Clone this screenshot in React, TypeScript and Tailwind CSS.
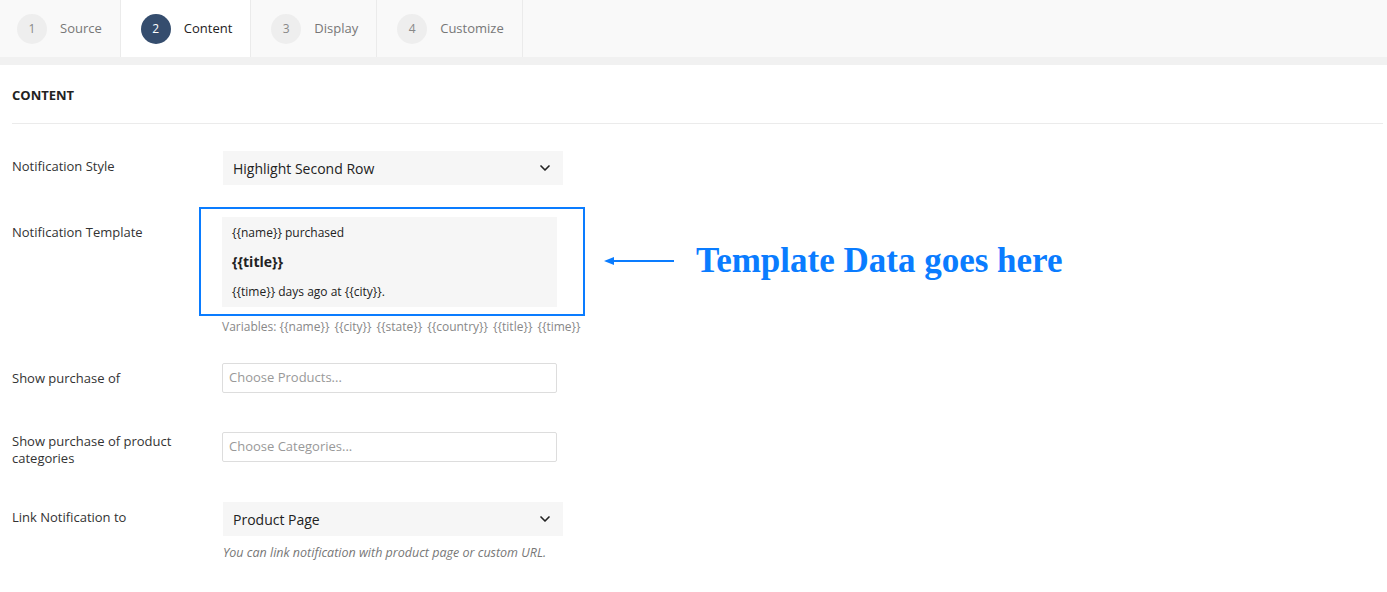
import { ChevronDown } from 'lucide-react';

const steps = [
  { n: 1, label: 'Source' },
  { n: 2, label: 'Content', active: true },
  { n: 3, label: 'Display' },
  { n: 4, label: 'Customize' },
];

function Select({ value }: { value: string }) {
  return (
    <div className="w-[340px] h-[34px] bg-[#f6f6f6] flex items-center justify-between pl-[10px] pr-[10px] text-[14px] text-[#222]">
      <span>{value}</span>
      <ChevronDown className="w-[16px] h-[16px] text-[#222]" strokeWidth={2.5} />
    </div>
  );
}

function Input({ placeholder }: { placeholder: string }) {
  return (
    <div className="w-[335px] h-[30px] border border-[#dddddd] rounded-[2px] bg-white flex items-center px-[6px] text-[13px] text-[#999]">
      {placeholder}
    </div>
  );
}

export default function App() {
  return (
    <div className="w-[1387px] h-[592px] bg-white overflow-hidden font-['Open_Sans',sans-serif] text-[13px] text-[#333]">
      {/* Steps */}
      <div className="h-[57px] bg-[#f9f9f9] flex">
        {steps.map((s, i) => (
          <div
            key={s.n}
            className={`flex items-center gap-[13px] border-r border-[#ebebeb] ${i === 0 ? 'pl-[17px] pr-[18px]' : 'pl-[20px] pr-[18px]'} ${s.active ? 'bg-white' : ''}`}
          >
            <div
              className={`w-[30px] h-[30px] rounded-full flex items-center justify-center text-[12px] ${s.active ? 'bg-[#354d6e] text-white' : 'bg-[#eeeeee] text-[#888]'}`}
            >
              {s.n}
            </div>
            <span className={s.active ? 'text-[#222]' : 'text-[#777]'}>{s.label}</span>
          </div>
        ))}
      </div>
      <div className="h-[8px] bg-[#f1f1f1]" />

      <div className="pl-[12px] pr-[4px]">
        <div className="h-[59px] flex items-center border-b border-[#ebebeb] pt-[3px]">
          <h2 className="font-bold text-[13px] text-[#222]">CONTENT</h2>
        </div>

        {/* Notification Style */}
        <div className="flex mt-[27px]">
          <div className="w-[211px] pt-[6px] text-[#333]">Notification Style</div>
          <Select value="Highlight Second Row" />
        </div>

        {/* Notification Template */}
        <div className="flex mt-[32px] relative">
          <div className="w-[210px] pt-[6px] text-[#333]">Notification Template</div>
          <div>
            <div className="w-[335px] h-[90px] bg-[#f6f6f6] pl-[10px] pt-[8px] text-[#222]">
              <div className="text-[12px] leading-[16px]">{'{{name}} purchased'}</div>
              <div className="text-[14px] font-bold leading-[18px] mt-[12px]">{'{{title}}'}</div>
              <div className="text-[12px] leading-[16px] mt-[13px]">{'{{time}} days ago at {{city}}.'}</div>
            </div>
            <div className="mt-[11px] text-[12px] text-[#888] flex gap-[5px]">
              <span>{'Variables: {{name}}'}</span>
              <span>{'{{city}}'}</span>
              <span>{'{{state}}'}</span>
              <span>{'{{country}}'}</span>
              <span>{'{{title}}'}</span>
              <span>{'{{time}}'}</span>
            </div>
          </div>

          {/* annotation */}
          <div className="absolute left-[187px] top-[-10px] w-[386px] h-[109px] border-2 border-[#0a7cff]" />
          <div className="absolute left-[592px] top-[26px] flex items-center">
            <svg width="70" height="10" viewBox="0 0 70 10">
              <line x1="6" y1="5" x2="70" y2="5" stroke="#0a7cff" strokeWidth="2" />
              <polygon points="0,5 10,1 10,9" fill="#0a7cff" />
            </svg>
            <span className="ml-[22px] font-['Liberation_Serif',serif] font-bold text-[35px] text-[#0a7cff] leading-none">
              Template Data goes here
            </span>
          </div>
        </div>

        {/* Show purchase of */}
        <div className="flex mt-[27px]">
          <div className="w-[210px] pt-[6px] text-[#333]">Show purchase of</div>
          <Input placeholder="Choose Products..." />
        </div>

        {/* Show purchase of product categories */}
        <div className="flex mt-[39px]">
          <div className="w-[210px] pt-[1px] text-[#333] leading-[17px]">
            Show purchase of product
            <br />
            categories
          </div>
          <Input placeholder="Choose Categories..." />
        </div>

        {/* Link Notification to */}
        <div className="flex mt-[35px]">
          <div className="w-[211px] pt-[6px] text-[#333]">Link Notification to</div>
          <div>
            <Select value="Product Page" />
            <div className="mt-[8px] text-[12.5px] italic text-[#777]">
              You can link notification with product page or custom URL.
            </div>
          </div>
        </div>
      </div>
    </div>
  );
}
